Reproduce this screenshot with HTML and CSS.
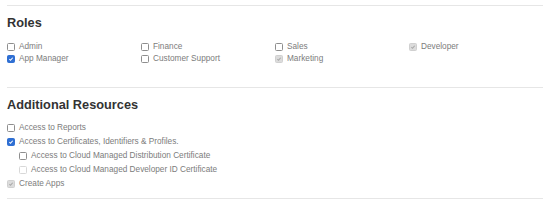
FILE: index.html
```html
<!DOCTYPE html>
<html lang="en">
<head>
    <meta charset="UTF-8">
    <meta name="viewport" content="width=device-width, initial-scale=1.0">
    <title>User Access</title>
    <link rel="stylesheet" href="styles.css">
</head>
<body>
    <!-- Roles -->
    <section class="section">
        <h2>Roles</h2>
        <div class="roles">
            <label class="check"><span class="box"></span>Admin</label>
            <label class="check"><span class="box"></span>Finance</label>
            <label class="check"><span class="box"></span>Sales</label>
            <label class="check"><span class="box disabled on"><svg viewBox="0 0 10 10"><path d="M2.3 5.2 L4.2 7.1 L7.8 2.9"/></svg></span>Developer</label>
            <label class="check"><span class="box on"><svg viewBox="0 0 10 10"><path d="M2.3 5.2 L4.2 7.1 L7.8 2.9"/></svg></span>App Manager</label>
            <label class="check"><span class="box"></span>Customer Support</label>
            <label class="check"><span class="box disabled on"><svg viewBox="0 0 10 10"><path d="M2.3 5.2 L4.2 7.1 L7.8 2.9"/></svg></span>Marketing</label>
        </div>
    </section>

    <!-- Additional resources -->
    <section class="section resources">
        <h2>Additional Resources</h2>
        <div class="list">
            <label class="check"><span class="box"></span>Access to Reports</label>
            <label class="check"><span class="box on"><svg viewBox="0 0 10 10"><path d="M2.3 5.2 L4.2 7.1 L7.8 2.9"/></svg></span>Access to Certificates, Identifiers &amp; Profiles.</label>
            <label class="check sub"><span class="box"></span>Access to Cloud Managed Distribution Certificate</label>
            <label class="check sub"><span class="box disabled"></span>Access to Cloud Managed Developer ID Certificate</label>
            <label class="check"><span class="box disabled on"><svg viewBox="0 0 10 10"><path d="M2.3 5.2 L4.2 7.1 L7.8 2.9"/></svg></span>Create Apps</label>
        </div>
    </section>
    <div class="section end"></div>
</body>
</html>
```

FILE: styles.css
```css
body {
    margin: 0;
    padding: 5px 7px 0;
    font-family: "Liberation Sans", Arial, sans-serif;
    background-color: #fff;
}
.section {
    border-top: 1px solid #e6e6e6;
    padding: 9px 0 22px;
}
.section h2 {
    margin: 0;
    font-size: 12.75px;
    line-height: 16px;
    font-weight: bold;
    color: #333;
}
.roles {
    margin-top: 10px;
    display: grid;
    grid-template-columns: repeat(4, 134px);
}
.list {
    margin-top: 8px;
    display: flex;
    flex-direction: column;
}
.resources {
    padding-bottom: 7px;
}
.resources .check {
    line-height: 14px;
}
.check {
    display: flex;
    align-items: center;
    font-size: 8.25px;
    line-height: 12px;
    color: #7c7c7c;
}
.check.sub {
    padding-left: 12px;
}
.box {
    width: 6px;
    height: 6px;
    margin-right: 4px;
    border: 1px solid #8e8e8e;
    border-radius: 1.5px;
    background-color: #fff;
    flex: none;
    display: flex;
}
.box svg {
    width: 100%;
    height: 100%;
    fill: none;
    stroke: #fff;
    stroke-width: 1.8;
}
.box.on {
    background-color: #2f6fd3;
    border-color: #2f6fd3;
}
.box.disabled {
    border-color: #d8d8d8;
}
.box.disabled.on {
    background-color: #dcdcdc;
    border-color: #d0d0d0;
}
.box.disabled.on svg {
    stroke: #a8a8a8;
}
.end {
    padding: 0;
}
```
